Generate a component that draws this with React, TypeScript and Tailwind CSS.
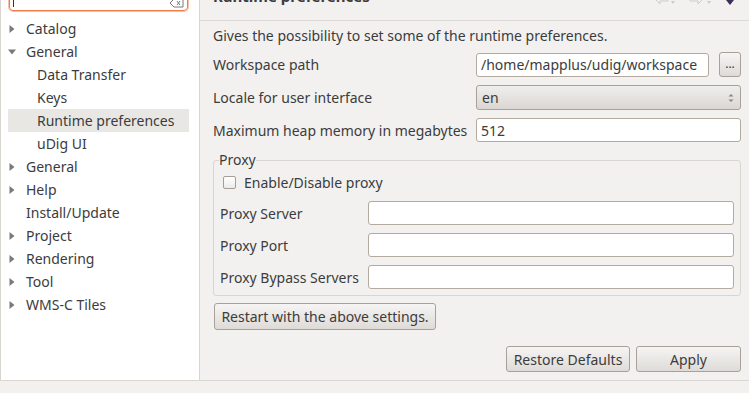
import React from "react"

const font = { fontFamily: '"Noto Sans", "Open Sans", sans-serif' }

const Tri = ({ open }: { open?: boolean }) =>
    open ? (
        <svg width="8" height="8" viewBox="0 0 8 8" className="shrink-0">
            <path d="M0 1.5 L8 1.5 L4 6.5 Z" fill="#7a7a7a" />
        </svg>
    ) : (
        <svg width="8" height="8" viewBox="0 0 8 8" className="shrink-0">
            <path d="M1.5 0 L6.5 4 L1.5 8 Z" fill="#7a7a7a" />
        </svg>
    )

type Item = { label: string; level: 0 | 1; arrow?: "open" | "closed"; selected?: boolean }

const tree: Item[] = [
    { label: "Catalog", level: 0, arrow: "closed" },
    { label: "General", level: 0, arrow: "open" },
    { label: "Data Transfer", level: 1 },
    { label: "Keys", level: 1 },
    { label: "Runtime preferences", level: 1, selected: true },
    { label: "uDig UI", level: 1 },
    { label: "General", level: 0, arrow: "closed" },
    { label: "Help", level: 0, arrow: "closed" },
    { label: "Install/Update", level: 0 },
    { label: "Project", level: 0, arrow: "closed" },
    { label: "Rendering", level: 0, arrow: "closed" },
    { label: "Tool", level: 0, arrow: "closed" },
    { label: "WMS-C Tiles", level: 0, arrow: "closed" },
]

const Input = ({ value, className = "" }: { value?: string; className?: string }) => (
    <div className={`h-[24px] bg-white border border-[#b3aba0] rounded-[3px] flex items-center px-[4px] text-[#3c3c3c] ${className}`}>
        {value}
    </div>
)

const Button = ({ children, className = "" }: { children: React.ReactNode; className?: string }) => (
    <div className={`flex items-center justify-center border border-[#a7a19a] rounded-[3px] bg-gradient-to-b from-[#f6f5f4] to-[#dedbd7] text-[#3c3c3c] ${className}`}>
        {children}
    </div>
)

const App = () => {
    return (
        <div className="w-[749px] h-[393px] bg-[#f2f1f0] overflow-hidden flex flex-col text-[14px] text-[#3c3c3c]" style={font}>
            <div className="flex h-[381px] border-b border-[#dad6d1]">
                {/* left tree */}
                <div className="w-[200px] h-full bg-white border-l border-[#b9b2a9] border-r border-[#d9d5d0] flex flex-col">
                    <div className="mx-[8px] w-[179px] h-[30px] -mt-[19px] border border-[#ef7a45] rounded-[4px] shadow-[0_0_0_1px_#f7c3a7] flex items-end justify-between pb-[2px] px-[3px] shrink-0">
                        <div className="w-px h-[10px] bg-[#333] mb-[1px]" />
                        <svg width="14" height="10" viewBox="0 0 14 10">
                            <path d="M4 1 H13 V9 H4 L0 5 Z" fill="none" stroke="#7a7a7a" strokeWidth="1" />
                            <path d="M7 3 L10 7 M10 3 L7 7" stroke="#7a7a7a" strokeWidth="1" />
                        </svg>
                    </div>
                    <div className="mt-[6px] flex flex-col">
                        {tree.map((t, i) => (
                            <div
                                key={i}
                                className={`h-[23px] flex items-center mr-[10px] ml-[7px] ${t.selected ? "bg-[#e9e7e3]" : ""}`}
                            >
                                <div className="w-[11px] flex justify-start">{t.arrow && <Tri open={t.arrow === "open"} />}</div>
                                <span className={t.level === 1 ? "ml-[18px]" : "ml-[7px]"}>{t.label}</span>
                            </div>
                        ))}
                    </div>
                </div>

                {/* right page */}
                <div className="flex-1 flex flex-col">
                    <div className="h-[21px] border-b border-[#dcd8d3] flex items-start justify-end pr-[14px] shrink-0 relative">
                        <span className="font-bold text-[15px] leading-none absolute left-[13px] -top-[11px]">Runtime preferences</span>
                        <div className="flex items-start gap-[12px] -mt-[12px]">
                            <svg width="24" height="18" viewBox="0 0 24 18">
                                <path d="M1 10 L7 4 V7 H15 V13 H7 V16 Z" fill="none" stroke="#cfcbc6" />
                                <path d="M18 13 L22 13 L20 16 Z" fill="#cfcbc6" />
                            </svg>
                            <svg width="24" height="18" viewBox="0 0 24 18">
                                <path d="M15 10 L9 4 V7 H1 V13 H9 V16 Z" fill="none" stroke="#cfcbc6" />
                                <path d="M18 13 L22 13 L20 16 Z" fill="#cfcbc6" />
                            </svg>
                            <svg width="10" height="18" viewBox="0 0 10 18">
                                <path d="M1 12 L9 12 L5 17 Z" fill="#3b2f58" />
                            </svg>
                        </div>
                    </div>

                    <div className="pl-[13px] pr-[8px] flex flex-col">
                        <div className="mt-[6px] h-[18px] leading-[18px]">Gives the possibility to set some of the runtime preferences.</div>

                        <div className="grid grid-cols-[263px_1fr] gap-y-[8px] items-center mt-[7px]">
                            <span>Workspace path</span>
                            <div className="flex items-center gap-[10px] h-[25px]">
                                <Input value="/home/mapplus/udig/workspace" className="flex-1" />
                                <Button className="w-[22px] h-[25px] text-[12px] pb-[2px]">...</Button>
                            </div>
                            <span>Locale for user interface</span>
                            <div className="h-[25px] border border-[#a7a19a] rounded-[3px] bg-gradient-to-b from-[#f0eeec] to-[#dad7d3] flex items-center justify-between px-[5px]">
                                <span>en</span>
                                <svg width="8" height="12" viewBox="0 0 8 12">
                                    <path d="M1.5 4.5 L4 2 L6.5 4.5 Z" fill="#8a8580" />
                                    <path d="M1.5 7.5 L4 10 L6.5 7.5 Z" fill="#8a8580" />
                                </svg>
                            </div>
                            <span>Maximum heap memory in megabytes</span>
                            <Input value="512" />
                        </div>

                        <fieldset className="mt-[9px] border border-[#d9d5d0] rounded-[3px] pl-[6px] pr-[6px] pb-[5px] pt-0 h-[145px]">
                            <legend className="ml-[-1px] px-0 leading-[18px]">Proxy</legend>
                            <div className="flex items-center ml-[3px] h-[24px] mt-[1px]">
                                <div className="w-[13px] h-[13px] border border-[#a49e97] rounded-[2px] bg-gradient-to-b from-white to-[#ecebe9]" />
                                <span className="ml-[8px]">Enable/Disable proxy</span>
                            </div>
                            <div className="grid grid-cols-[148px_1fr] gap-y-[8px] items-center mt-[7px]">
                                <span>Proxy Server</span>
                                <Input />
                                <span>Proxy Port</span>
                                <Input />
                                <span>Proxy Bypass Servers</span>
                                <Input />
                            </div>
                        </fieldset>

                        <Button className="mt-[7px] w-[222px] h-[27px] ml-[1px]">Restart with the above settings.</Button>

                        <div className="flex justify-end gap-[6px] mt-[16px]">
                            <Button className="w-[124px] h-[26px]">Restore Defaults</Button>
                            <Button className="w-[105px] h-[26px]">Apply</Button>
                        </div>
                    </div>
                </div>
            </div>
        </div>
    )
}

export default App
